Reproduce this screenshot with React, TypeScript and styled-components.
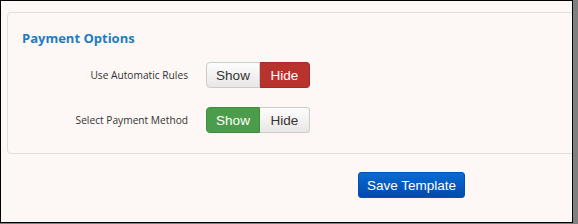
import styled, { createGlobalStyle } from "styled-components";

const GlobalStyle = createGlobalStyle`
  html, body {
    margin: 0;
    padding: 0;
    background: #808080;
  }
`;

const Frame = styled.div`
  box-sizing: border-box;
  width: 573px;
  height: 223px;
  border: 1px solid #000;
  background: #fdf8f5;
  overflow: hidden;
  padding: 11px 0 0 6px;
`;

const Panel = styled.section`
  box-sizing: border-box;
  width: 600px;
  height: 142px;
  border: 1px solid #e2dedb;
  border-radius: 4px;
  padding: 16px 0 0 14px;
`;

const Title = styled.h3`
  margin: 0 0 15px;
  font-family: "Open Sans", sans-serif;
  font-size: 13px;
  font-weight: 700;
  color: #1b7dc6;
  line-height: 18px;
`;

const Row = styled.div`
  display: grid;
  grid-template-columns: 166px auto;
  column-gap: 18px;
  align-items: center;
  margin-bottom: 19px;
`;

const Label = styled.label`
  text-align: right;
  font-family: "Open Sans", sans-serif;
  font-size: 10.2px;
  color: #333;
`;

const Group = styled.div`
  display: flex;
`;

const Toggle = styled.button<{ $tone?: "red" | "green"; $w: number }>`
  box-sizing: border-box;
  width: ${(p) => p.$w}px;
  height: 26px;
  margin: 0;
  font-family: "Liberation Sans", Arial, sans-serif;
  font-size: 13.5px;
  padding: 0;
  cursor: pointer;
  color: ${(p) => (p.$tone ? "#fff" : "#333")};
  border: 1px solid
    ${(p) =>
      p.$tone === "red" ? "#a82a27" : p.$tone === "green" ? "#3f8e3f" : "#cfcbc8"};
  background: ${(p) =>
    p.$tone === "red"
      ? "#b8322e"
      : p.$tone === "green"
      ? "#4b9d4b"
      : "linear-gradient(#fdfdfd, #e9e7e5)"};
  &:first-child {
    border-radius: 4px 0 0 4px;
  }
  &:last-child {
    border-radius: 0 4px 4px 0;
    border-left: none;
  }
`;

const Footer = styled.div`
  padding: 18px 0 0 351px;
`;

const SaveButton = styled.button`
  box-sizing: border-box;
  width: 107px;
  height: 26px;
  border: 1px solid #0050b8;
  border-radius: 3px;
  background: linear-gradient(#0a6bd2, #0049ae);
  color: #fff;
  font-family: "Liberation Sans", Arial, sans-serif;
  font-size: 13.5px;
  padding: 0;
  cursor: pointer;
`;

function Switch({ on }: { on: boolean }) {
  return (
    <Group>
      <Toggle $w={54} $tone={on ? "green" : undefined}>Show</Toggle>
      <Toggle $w={50} $tone={on ? undefined : "red"}>Hide</Toggle>
    </Group>
  );
}

export default function App() {
  return (
    <>
      <GlobalStyle />
      <Frame>
        <Panel>
          <Title>Payment Options</Title>
          <Row>
            <Label>Use Automatic Rules</Label>
            <Switch on={false} />
          </Row>
          <Row>
            <Label>Select Payment Method</Label>
            <Switch on={true} />
          </Row>
        </Panel>
        <Footer>
          <SaveButton>Save Template</SaveButton>
        </Footer>
      </Frame>
    </>
  );
}
